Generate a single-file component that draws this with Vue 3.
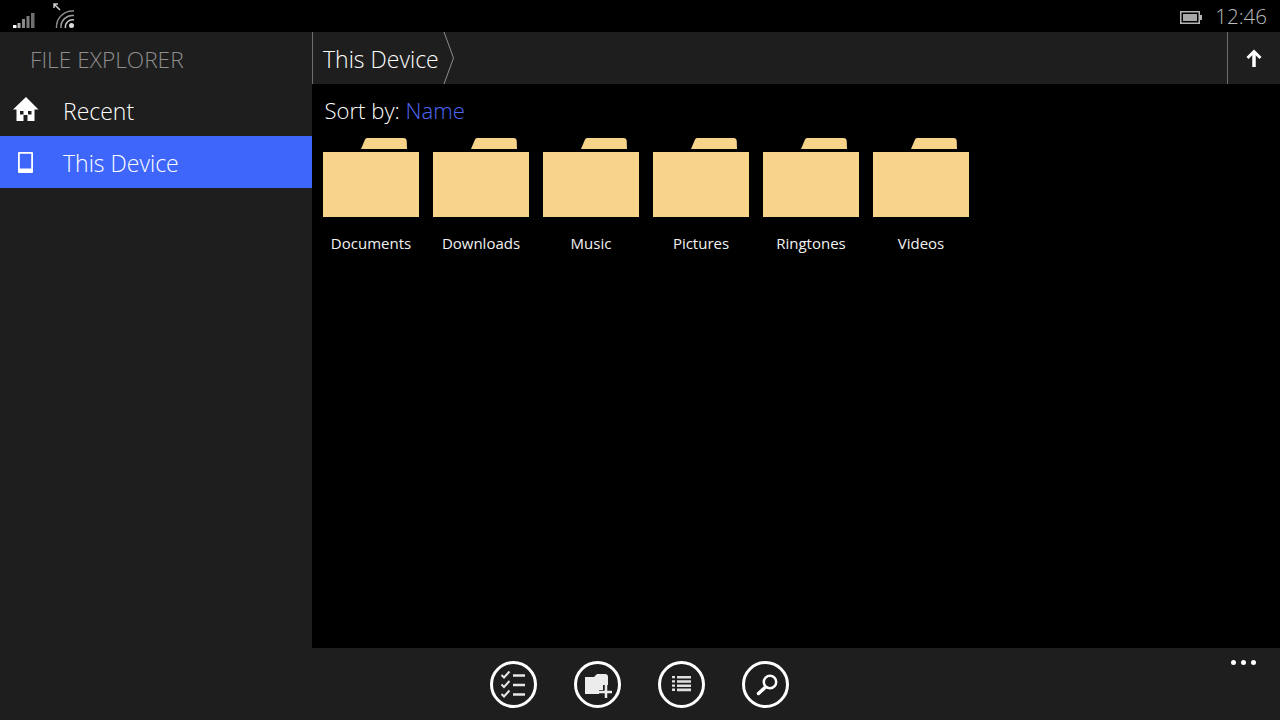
<template>
  <div class="phone">
    <!-- status bar -->
    <div class="status-bar">
      <div class="status-left">
        <svg class="signal" width="24" height="16" viewBox="0 0 24 16">
          <rect x="0" y="12" width="3.500" height="3" fill="#fff" />
          <rect x="4.500" y="10" width="3" height="5" fill="#b0b0b0" />
          <rect x="9" y="6" width="3" height="9" fill="#8a8a8a" />
          <rect x="13.500" y="3" width="3" height="12" fill="#7c7c7c" />
          <rect x="18" y="0" width="3.500" height="15" fill="#707070" />
        </svg>
        <svg class="wifi" width="26" height="28" viewBox="0 0 26 28">
          <path d="M7 7L1 1M1 5V1h4" stroke="#ccc" stroke-width="1.500" fill="none" />
          <circle cx="18.500" cy="22.500" r="2.500" fill="#ddd" />
          <path d="M12.500 25a7 7 0 0 1 8.500-8" stroke="#c4c4c4" stroke-width="1.500" fill="none" />
          <path d="M8 25a11.500 11.500 0 0 1 13-12.500" stroke="#a0a0a0" stroke-width="1.500" fill="none" />
          <path d="M3.500 25a16 16 0 0 1 17.500-17" stroke="#8c8c8c" stroke-width="1.500" fill="none" />
        </svg>
      </div>
      <div class="status-right">
        <svg width="23" height="13" viewBox="0 0 23 13">
          <rect x="0.750" y="0.750" width="18.500" height="11.500" fill="none" stroke="#b4b4b4" stroke-width="1.500" />
          <rect x="3" y="3" width="14" height="7" fill="#a8a8a8" />
          <rect x="20" y="4" width="2" height="5" fill="#b4b4b4" />
        </svg>
        <span class="clock">12:46</span>
      </div>
    </div>

    <div class="main">
      <!-- sidebar -->
      <aside class="sidebar">
        <div class="app-title">FILE EXPLORER</div>
        <div v-for="item in navItems" :key="item.label" class="nav-item" :class="{ active: item.active }">
          <span class="nav-icon">
            <svg v-if="item.icon === 'home'" width="26" height="26" viewBox="0 0 26 26">
              <path d="M13 0L0 12.500h3.500V24h7v-6h4v6h7V12.500H25.500z M7 14h3.500v3.500H7z M15 14h3.500v3.500H15z" fill="#fff" fill-rule="evenodd" />
            </svg>
            <svg v-else width="26" height="26" viewBox="0 0 26 26">
              <path d="M5 4a1 1 0 0 1 1-1h13a1 1 0 0 1 1 1v19a1 1 0 0 1-1 1H6a1 1 0 0 1-1-1z M6.800 4.800v14.700h11.400V4.800z" fill="#fff" fill-rule="evenodd" />
            </svg>
          </span>
          <span class="nav-label">{{ item.label }}</span>
        </div>
      </aside>

      <section class="content">
        <!-- breadcrumb -->
        <header class="crumb-bar">
          <div class="crumb">
            <span class="crumb-text">This Device</span>
            <svg class="chevron" width="12" height="52" viewBox="0 0 12 52">
              <path d="M1 0l9.500 26L1 52" fill="none" stroke="#8c8c8c" stroke-width="1" />
            </svg>
          </div>
          <div class="up-btn">
            <svg width="16" height="19" viewBox="0 0 16 19" fill="none" stroke="#fff">
              <path d="M8 18V3" stroke-width="3.500" />
              <path d="M1.500 9L8 2.500 14.500 9" stroke-width="3" />
            </svg>
          </div>
        </header>

        <!-- file list -->
        <div class="browser">
          <div class="sort-row">Sort by: <span class="sort-value">Name</span></div>
          <div class="folders">
            <div v-for="name in folders" :key="name" class="folder">
              <div class="folder-tab-row">
                <svg width="46" height="11" viewBox="0 0 46 11">
                  <path d="M0 11L4 1.500Q4.600 0 6 0H43Q45.500 0 45.700 2.500L46 11z" fill="#f8d48a" />
                </svg>
              </div>
              <div class="folder-body"></div>
              <div class="folder-name">{{ name }}</div>
            </div>
          </div>
        </div>
      </section>
    </div>

    <!-- app bar -->
    <footer class="app-bar">
      <div class="app-buttons">
        <div class="round-btn">
          <svg width="28" height="28" viewBox="0 0 28 28" fill="none" stroke="#e6e6e6">
            <path d="M1.500 5l2.500 2.500L9.500 1.500M1.500 14.500L4 17l5.500-6M1.500 24L4 26.500l5.500-6" stroke-width="2" />
            <path d="M13 5.500h12M13 15h12M13 24.500h12" stroke-width="2.500" />
          </svg>
        </div>
        <div class="round-btn">
          <svg width="28" height="28" viewBox="0 0 28 28">
            <path d="M1 7h9l3-3h8q3 0 3 3v8h-5v5h-4v4H1z" fill="#ececec" />
            <path d="M22 15v14M15 22h14" stroke="#ececec" stroke-width="2.500" fill="none" />
          </svg>
        </div>
        <div class="round-btn">
          <svg width="24" height="24" viewBox="0 0 24 24" fill="#e0e0e0">
            <path d="M2 4h3v2.300H2zM2 8.200h3v2.300H2zM2 12.400h3v2.300H2zM2 16.600h3v2.300H2z" />
            <path d="M7 4h14v2.600H7zM7 8.200h14v2.600H7zM7 12.400h14v2.600H7zM7 16.600h14v2.600H7z" />
          </svg>
        </div>
        <div class="round-btn">
          <svg width="28" height="28" viewBox="0 0 28 28" fill="none" stroke="#fff">
            <circle cx="18" cy="12" r="6.200" stroke-width="2.500" />
            <path d="M13 17.500L6.500 23.500" stroke-width="3.500" stroke-linecap="round" />
          </svg>
        </div>
      </div>
      <div class="more-dots"><i></i><i></i><i></i></div>
    </footer>
  </div>
</template>

<script setup>
const navItems = [
  { label: 'Recent', icon: 'home' },
  { label: 'This Device', icon: 'phone', active: true },
]

const folders = ['Documents', 'Downloads', 'Music', 'Pictures', 'Ringtones', 'Videos']
</script>

<style>
html, body { margin: 0; background: #000; }
</style>

<style scoped>
.phone {
  width: 1280px; height: 720px; overflow: hidden;
  display: flex; flex-direction: column;
  background: #000; color: #fff;
  font-family: "Open Sans", "Noto Sans", sans-serif;
}

/* status bar */
.status-bar {
  height: 32px; flex-shrink: 0; background: #000;
  display: flex; align-items: stretch; justify-content: space-between;
}
.status-left { display: flex; width: 200px; }
.signal { margin: 13px 0 0 13px; }
.wifi { margin: 3px 0 0 16px; }
.status-right { display: flex; align-items: center; gap: 12px; padding-right: 13px; }
.status-right svg { margin-top: 3px; }
.clock { font-size: 20.500px; font-weight: 300; color: #bdbdbd; line-height: 32px; }

.main { flex: 1; display: flex; min-height: 0; }

/* sidebar */
.sidebar { width: 312px; flex-shrink: 0; background: #1e1e1e; }
.app-title {
  height: 52px; line-height: 56px; padding-left: 30px;
  font-size: 22.700px; font-weight: 300; color: #8e8e8e;
}
.nav-item { height: 52px; display: flex; align-items: center; }
.nav-item.active { background: #3e66fb; }
.nav-icon { width: 63px; padding-left: 13px; box-sizing: border-box; display: flex; }
.nav-label { font-size: 23px; font-weight: 300; line-height: 52px; padding-top: 2px; }

/* content */
.content { flex: 1; display: flex; flex-direction: column; min-width: 0; }
.crumb-bar {
  height: 52px; flex-shrink: 0; background: #1e1e1e;
  display: flex; justify-content: space-between;
}
.crumb {
  display: flex; align-items: center; gap: 4px;
  padding-left: 10px; border-left: 1px solid #6e6e6e;
  font-size: 23px; font-weight: 300;
}
.crumb-text { padding-top: 2px; }
.chevron { display: block; }
.up-btn {
  width: 53px; border-left: 1px solid #6e6e6e; padding-top: 1px; box-sizing: border-box;
  display: flex; align-items: center; justify-content: center;
}
.browser { flex: 1; padding: 0 0 0 12.500px; }
.sort-row { font-size: 22.100px; font-weight: 300; line-height: 30px; padding-top: 11px; }
.sort-value { color: #4d68f2; }
.folders { display: flex; margin-top: 13px; margin-left: -1.500px; }
.folder { width: 96px; margin-right: 14px; }
.folder-tab-row { height: 11px; display: flex; justify-content: flex-end; padding-right: 12px; }
.folder-tab-row svg { display: block; }
.folder-body { height: 65px; margin-top: 3px; background: #f8d48a; }
.folder-name {
  margin-top: 15px; text-align: center; white-space: nowrap;
  font-size: 15px; line-height: 22px; color: #f2f2f2;
}

/* app bar */
.app-bar {
  height: 72px; flex-shrink: 0; background: #1e1e1e;
  display: flex; justify-content: center; position: relative;
}
.app-buttons { display: flex; gap: 37px; padding-top: 12.500px; padding-right: 1px; }
.round-btn {
  width: 47px; height: 47px; box-sizing: border-box;
  border: 3px solid #fff; border-radius: 50%;
  display: flex; align-items: center; justify-content: center;
}
.more-dots { position: absolute; right: 24px; top: 12px; display: flex; gap: 5px; }
.more-dots i { width: 5px; height: 5px; border-radius: 50%; background: #fff; display: block; }
</style>
